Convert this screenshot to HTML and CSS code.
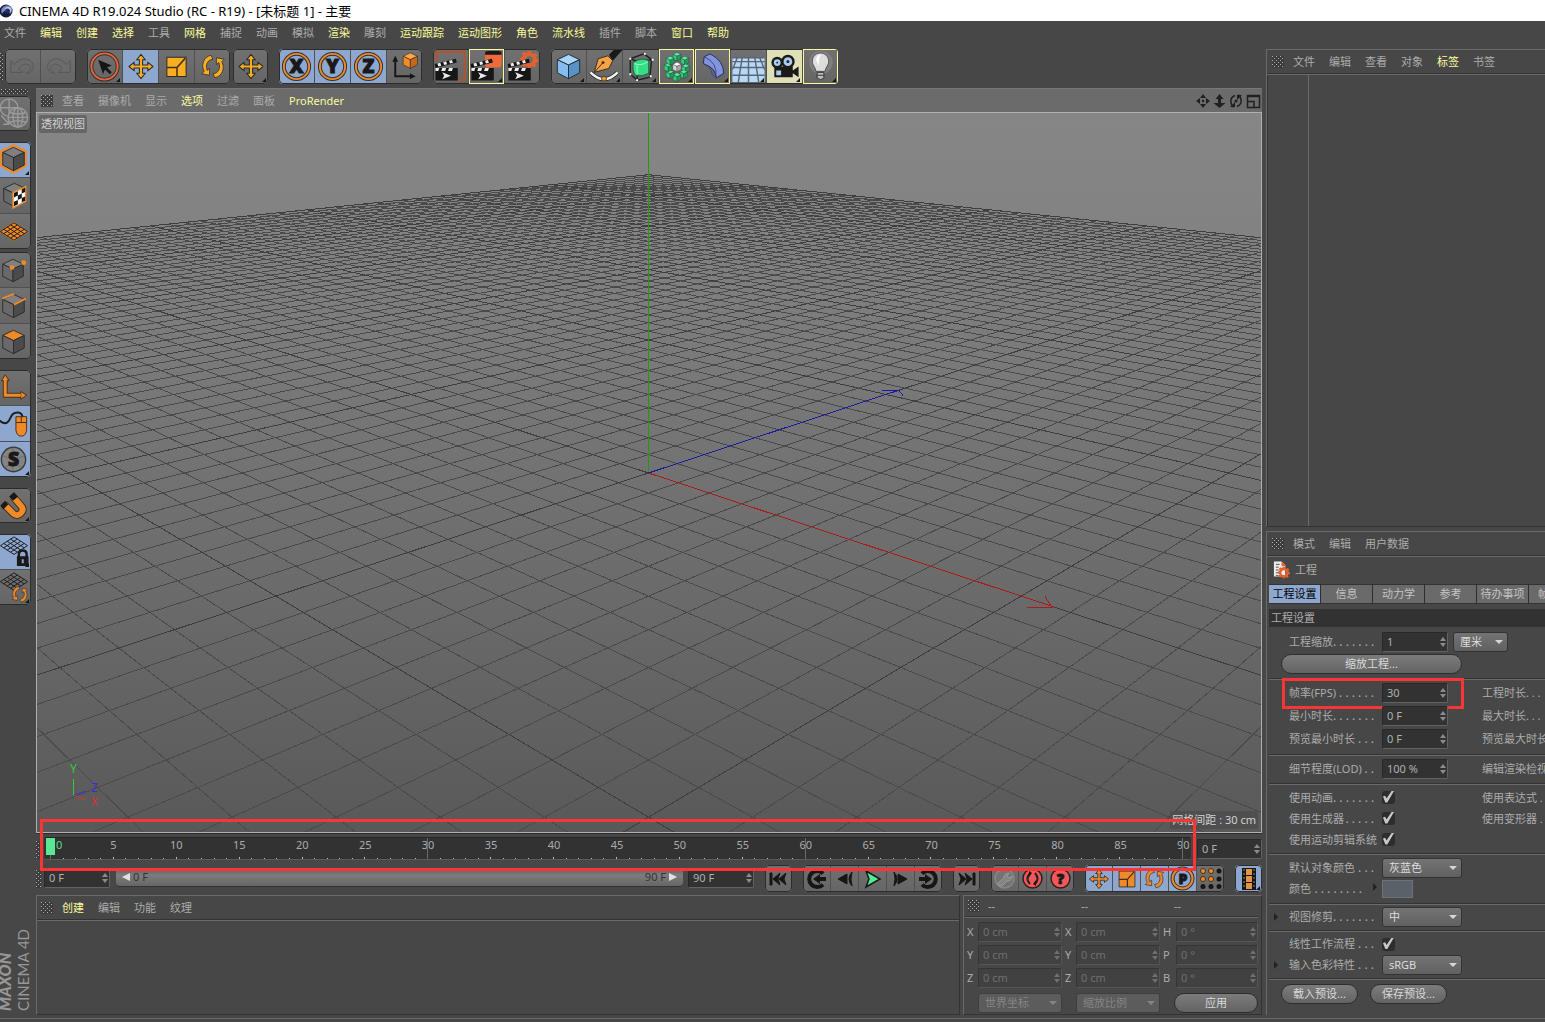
FILE: index.html
```html
<!DOCTYPE html>
<html lang="zh-CN">
<head>
    <meta charset="UTF-8">
    <title>CINEMA 4D</title>
    <link rel="stylesheet" href="styles.css">
</head>
<body>
<svg class="defs" aria-hidden="true">
    <symbol id="cube" viewBox="0 0 26 28">
        <path class="cube-top" d="M13 1.5L24.500 7 13 12.500 1.500 7z"/>
        <path class="cube-left" d="M1.500 7L13 12.500V26.500L1.500 20.500z"/>
        <path class="cube-right" d="M24.500 7L13 12.500V26.500L24.500 20.500z"/>
    </symbol>
    <symbol id="move" viewBox="0 0 24 24">
        <path d="M12 .5l4 5h-2.500v5h5V8l5 4-5 4v-2.500h-5v5H16l-4 5-4-5h2.500v-5h-5V16l-5-4 5-4v2.500h5v-5H8z" stroke="#2b2b2b"/>
    </symbol>
    <symbol id="scale" viewBox="0 0 24 24">
        <path d="M2.500 2.500h19v19h-19z" stroke="#2b2b2b"/>
        <path d="M2.500 12.500h10v9M12.500 12.500l8-9" fill="none" stroke="#3b3020" stroke-width="1.500"/>
    </symbol>
    <symbol id="rotate" viewBox="0 0 26 26">
        <path d="M11 1.500C3 3 .5 12 4 18L1.500 20.500l8 1.500V15l-2.500 2C5 12 7 6 13 5.500z" stroke="#2b2b2b" stroke-width=".8"/>
        <path d="M15 24.500C23 23 25.500 14 22 8l2.500-2.500L16.500 4v7L19 9c2 5 0 11-6 11.500z" stroke="#2b2b2b" stroke-width=".8"/>
    </symbol>
    <symbol id="clapper" viewBox="0 0 26 24">
        <path d="M1 10h23v13H1z" fill="#161616"/>
        <path d="M0 6L22 .5l1 4L1 10z" fill="#161616"/>
        <path d="M3 5.500l3-.8 1 3-3 .8zM9 4l3-.8 1 3-3 .8zM15 2.500l3-.8 1 3-3 .8zM1 10h4l-1 3H1zM8 10h4l-1 3H7zM15 10h4l-1 3h-4z" fill="#eee"/>
        <path d="M8 14.500l9 3.500-9 3.500 2-3.500z" fill="#e8e8e8"/>
    </symbol>
    <symbol id="gear" viewBox="0 0 20 20">
        <path fill-rule="evenodd" d="M8 1h4l.5 2.500 1.800.8L16.500 3 19 5.800l-1.500 2L18 9.500l1.800.5v3l-2.300.6-.8 1.800 1.300 2L15.300 19l-2-1.300-1.300.6L11.500 20h-3l-.7-2-1.600-.6L4 18.500 1.500 16l1.300-2.200L2 12 0 11.500V8.500L2.300 8 3 6.200 1.800 4 4.500 1.600l2 1.400L8 2.500zM10 6.500a4 4 0 1 0 .01 0z"/>
    </symbol>
    <symbol id="spin" viewBox="0 0 6 10">
        <path d="M0 4l3-4 3 4zM0 6l3 4 3-4z"/>
    </symbol>
    <symbol id="mesh" viewBox="0 0 32 20">
        <path d="M16 1L30 10 16 19 2 10zM12.500 3.200l14 9M9 5.500l14 9M5.500 7.700l14 9M19.500 3.200l-14 9M23 5.500l-14 9M26.500 7.700l-14 9"/>
    </symbol>
</svg>

<header class="titlebar">
    <svg class="logo" viewBox="0 0 14 14"><circle cx="6" cy="7" r="6.500" fill="#141a3c"/><path d="M2 10C-1 4 6-1 11 3l2 3-3 4c-2-5-6-4-8 0z" fill="#7a8bc6"/><circle cx="8" cy="6" r="3" fill="#c9d1ee"/><circle cx="7.500" cy="7" r="2.500" fill="#222b5e"/></svg>
    <h1>CINEMA 4D R19.024 Studio (RC - R19) - [未标题 1] - 主要</h1>
</header>

<nav class="menu menubar">
    <a href="#">文件</a>
    <a href="#" class="on">编辑</a>
    <a href="#" class="on">创建</a>
    <a href="#" class="on">选择</a>
    <a href="#">工具</a>
    <a href="#" class="on">网格</a>
    <a href="#">捕捉</a>
    <a href="#">动画</a>
    <a href="#">模拟</a>
    <a href="#" class="on">渲染</a>
    <a href="#">雕刻</a>
    <a href="#" class="on">运动跟踪</a>
    <a href="#" class="on">运动图形</a>
    <a href="#" class="on">角色</a>
    <a href="#" class="on">流水线</a>
    <a href="#">插件</a>
    <a href="#">脚本</a>
    <a href="#" class="on">窗口</a>
    <a href="#" class="on">帮助</a>
</nav>

<div class="app">
    <div class="workspace">
        <div class="toolbar">
            <i class="grip grip-tall"></i>
            <div class="group">
                <button aria-label="撤销"><svg viewBox="0 0 35 36"><path class="ghost" d="M5.500 12v12h12l-4-4c4-5 9-6 12-2 1 3-1 5-4 7 6 0 9-6 6-11-5-6-13-5-18 2z"/></svg></button>
                <button aria-label="重做"><svg viewBox="0 0 35 36"><path class="ghost" d="M29.500 12v12h-12l4-4c-4-5-9-6-12-2-1 3 1 5 4 7-6 0-9-6-6-11 5-6 13-5 18 2z"/></svg></button>
            </div>
            <div class="group">
                <button class="more" aria-label="实时选择"><svg viewBox="0 0 35 36"><circle cx="17.500" cy="18" r="13.500" fill="none" stroke="#33302f" stroke-width="4"/><circle cx="17.500" cy="18" r="13.500" fill="none" stroke="#e5653a" stroke-width="2"/><path d="M11 11l14 6-5 2 5 5-2 2-5-5-2 5z" fill="#161616"/></svg></button>
                <button class="active amber" aria-label="移动"><svg viewBox="0 0 35 36"><use href="#move" x="5" y="5" width="26" height="26"/></svg></button>
                <button class="amber" aria-label="缩放"><svg viewBox="0 0 35 36"><use href="#scale" x="5" y="6" width="25" height="25"/></svg></button>
                <button class="amber" aria-label="旋转"><svg viewBox="0 0 35 36"><use href="#rotate" x="5" y="5" width="26" height="26"/></svg></button>
            </div>
            <div class="group near">
                <button class="amber more" aria-label="最近工具"><svg viewBox="0 0 35 36"><use href="#move" x="5" y="5" width="26" height="26"/></svg></button>
            </div>
            <div class="group">
                <button class="active" aria-label="X 轴"><svg viewBox="0 0 35 36"><circle class="ring-back" cx="17.500" cy="18" r="13"/><circle class="ring" cx="17.500" cy="18" r="13"/><text x="17.500" y="25">X</text></svg></button>
                <button class="active" aria-label="Y 轴"><svg viewBox="0 0 35 36"><circle class="ring-back" cx="17.500" cy="18" r="13"/><circle class="ring" cx="17.500" cy="18" r="13"/><text x="17.500" y="25">Y</text></svg></button>
                <button class="active" aria-label="Z 轴"><svg viewBox="0 0 35 36"><circle class="ring-back" cx="17.500" cy="18" r="13"/><circle class="ring" cx="17.500" cy="18" r="13"/><text x="17.500" y="25">Z</text></svg></button>
                <button class="orange" aria-label="坐标系统"><svg viewBox="0 0 35 36"><path d="M8 12v16h16" fill="none" stroke="#161616" stroke-width="2"/><path d="M8 7l3 6H5zM29 28l-6-3v6z" fill="#161616"/><use href="#cube" x="15" y="3" width="17" height="18"/></svg></button>
            </div>
            <div class="group">
                <button aria-label="渲染活动视图"><svg viewBox="0 0 35 36"><path d="M3 12V3h29v29h-8" fill="none" stroke="#b9502a" stroke-width="2"/><use href="#clapper" x="1" y="9" width="26" height="25"/></svg></button>
                <button class="lit more" aria-label="渲染到图片查看器"><svg viewBox="0 0 35 36"><rect x="16" y="2" width="17" height="17" rx="3" fill="#ee6a38"/><path d="M16 6V4q0-2 3-2h11q3 0 3 2v2z" fill="#191919"/><use href="#clapper" x="1" y="9" width="26" height="25"/></svg></button>
                <button aria-label="编辑渲染设置"><svg viewBox="0 0 35 36"><use href="#gear" x="15" y="1" width="19" height="19" fill="#e5602f"/><use href="#clapper" x="2" y="9" width="26" height="25"/></svg></button>
            </div>
            <div class="group">
                <button class="more sky" aria-label="立方体"><svg viewBox="0 0 35 36"><use href="#cube" x="4" y="4" width="27" height="28"/></svg></button>
                <button class="more" aria-label="画笔"><svg viewBox="0 0 35 36"><path d="M22 6l5-5h9L26 12z" fill="#191919"/><path d="M21 7l5 5-4 8-15 4 4-14z" fill="#f4a244" stroke="#3a2c1c"/><path d="M7 24l9-10" stroke="#3a2c1c"/><circle cx="16" cy="14" r="1.500" fill="#3a2c1c"/><path d="M3 24q14 14 28 0" fill="none" stroke="#222" stroke-width="4"/><path d="M3 24q14 14 28 0" fill="none" stroke="#f2f2f2" stroke-width="2.500"/><circle cx="17" cy="30.500" r="2.500" fill="#f39a35" stroke="#5b3916"/></svg></button>
                <button class="more green" aria-label="细分曲面"><svg viewBox="0 0 35 36"><path d="M7 10l14-5 8 6-2 18-13 3-7-6zM7 10l8 3 14-2M15 13l-1 18" fill="none" stroke="#222" stroke-width="1.500"/><path d="M10 14q8-6 16-2v13q-7 4-14 2-3-4-2-13z" fill="#34df86" stroke="#1b6540"/><path d="M11 15q7 3 14-2M14 17v9" fill="none" stroke="#9bffc8"/><path d="M6 9h2v2H6zM21 4h2v2h-2zM29 10h2v2h-2zM27 27h2v2h-2zM13 31h2v2h-2zM6 25h2v2H6z" fill="#fff"/></svg></button>
                <button class="more lit green" aria-label="克隆"><svg viewBox="0 0 35 36"><use href="#cube" x="13" y="3" width="10" height="10"/><use href="#cube" x="21" y="7" width="10" height="10"/><use href="#cube" x="22" y="15" width="10" height="10"/><use href="#cube" x="20" y="21" width="10" height="10"/><use href="#cube" x="13" y="24" width="10" height="10"/><use href="#cube" x="6" y="21" width="10" height="10"/><use href="#cube" x="4" y="14" width="10" height="10"/><use href="#cube" x="6" y="7" width="10" height="10"/><use class="pale" href="#cube" x="13" y="13" width="10" height="11"/></svg></button>
                <button class="more lit" aria-label="弯曲"><svg viewBox="0 0 35 36"><path d="M9 8l6-3q14 7 14 20l-8 5q1-10-13-15z" fill="#8393dc" stroke="#262b52"/><path d="M9 8q14 6 12 21M21 29l-4-3q0-7-9-11" fill="none" stroke="#3c4788"/></svg></button>
                <button class="more" aria-label="地面"><svg viewBox="0 0 35 36"><path d="M1 9h33v25H1z" fill="#b8d8fa"/><path d="M1 9h33M1 13h33M1 19h33M1 27h33M17.500 9v25M11 9L7 34M24 9l4 25M6 9L1 21M29 9l5 12" fill="none" stroke="#5b6670" stroke-width="1.500"/></svg></button>
                <button class="more cream" aria-label="摄像机"><svg viewBox="0 0 35 36"><path d="M7 18h19v4l6-4v11l-6-4v4H7z" fill="#1a1a1a"/><circle cx="10" cy="14" r="6" fill="#1a1a1a"/><circle cx="21" cy="13" r="7" fill="#1a1a1a"/><circle cx="10" cy="14" r="3.500" fill="#a9cbef"/><circle cx="21" cy="13" r="4.500" fill="#a9cbef"/><circle cx="10" cy="14" r="1" fill="#1a1a1a"/><circle cx="21" cy="13" r="1.500" fill="#1a1a1a"/><path d="M9 22h5v5H9z" fill="#a9cbef"/></svg></button>
                <button class="more lit" aria-label="灯光"><svg viewBox="0 0 35 36"><circle cx="18" cy="14" r="12" fill="#fff" opacity=".13"/><path d="M13 23C12 18 9 17 9 12.500a8.500 8.500 0 0 1 17 0C26 17 23 18 22 23z" fill="#ddd" stroke="#555"/><path d="M13 11q1-5 5-5-3 4-2 12" fill="#fff"/><path d="M14 24h7v6q-3 3-7 0z" fill="#bbb" stroke="#333"/><path d="M14 27h7" stroke="#333"/></svg></button>
            </div>
        </div>

        <div class="stage">
            <aside class="palette">
                <i class="grip grip-wide"></i>
                <div class="group">
                    <button aria-label="转为可编辑对象"><svg viewBox="0 0 35 36"><g fill="none" stroke="#999" stroke-width="1.500"><circle cx="13" cy="12" r="9"/><path d="M13 3v18M4 12h18M5 20l8 9M13 29l-1-6M13 29H7"/><circle cx="22" cy="22" r="10" fill="#6f6f6f"/><ellipse cx="22" cy="22" rx="5" ry="10"/><path d="M22 12v20M12 22h20M14 17q8 3 16 0M14 27q8-3 16 0"/></g></svg></button>
                </div>
                <div class="group">
                    <button class="active more grey" aria-label="模型"><svg viewBox="0 0 35 36"><path d="M17.500 3.500L30 9.500v15l-12.500 7L5 24.500v-15z" fill="none" stroke="#f08a28" stroke-width="2.500"/><use href="#cube" x="5" y="4" width="25" height="27"/></svg></button>
                    <button class="grey" aria-label="纹理"><svg viewBox="0 0 35 36"><use href="#cube" x="6" y="4" width="25" height="27"/><path d="M17 15l13-6v15l-13 7z" fill="#fff" stroke="#f08a28" stroke-width="1.500"/><path d="M18 15.500l4-2V18l-4 2zM22 18l4-2v4.500l-4 2zM26 11.500l3.500-1.500v4.500L26 16zM18 24.500l4-2V27l-4 2zM26 20.500l3.500-1.500v4.500L26 25z" fill="#161616"/></svg></button>
                    <button aria-label="工作平面"><svg viewBox="0 0 35 36"><path d="M18 8l15 10-15 10L3 18z" fill="#ee8727"/><use class="mesh thin" href="#mesh" x="1" y="8" width="34" height="20"/></svg></button>
                </div>
                <div class="group near">
                    <button class="grey" aria-label="点"><svg viewBox="0 0 35 36"><use href="#cube" x="5" y="6" width="24" height="26"/><circle cx="16" cy="16" r="2.500" fill="#f08a28"/><circle cx="28" cy="11" r="2.500" fill="#f08a28"/></svg></button>
                    <button class="grey" aria-label="边"><svg viewBox="0 0 35 36"><use href="#cube" x="5" y="5" width="25" height="27"/><path d="M6 11l12-5M18 17l12-6" stroke="#f08a28" stroke-width="2"/></svg></button>
                    <button class="grey face" aria-label="多边形"><svg viewBox="0 0 35 36"><use href="#cube" x="5" y="5" width="25" height="27"/></svg></button>
                </div>
                <div class="group">
                    <button aria-label="启用轴心"><svg viewBox="0 0 35 36"><path d="M9 10v16h16" fill="none" stroke="#46301c" stroke-width="5"/><path d="M9 5l4 6H5zM31 26l-6-4v8z" fill="#f08a28" stroke="#46301c"/><path d="M9 10v16h16" fill="none" stroke="#f08a28" stroke-width="3"/></svg></button>
                    <button class="active" aria-label="微调"><svg viewBox="0 0 35 36"><path d="M3 15c7 6 10 1 12-4s11-7 12 1" fill="none" stroke="#1d1d1d" stroke-width="2"/><path d="M20 11h11v14q-1 6-5.500 6T20 25z" fill="#f08a28" stroke="#432e18"/><path d="M20 17h11M25.500 11v6" stroke="#432e18"/></svg></button>
                    <button class="active more" aria-label="视窗独显"><svg viewBox="0 0 35 36"><circle cx="17.500" cy="18" r="12.500" fill="#858585" stroke="#3b3b3b" stroke-width="1.500"/><path d="M6 14q12 6 23 0M8 26q9-5 18 0M17 6v24" fill="none" stroke="#6d6d6d"/><text x="17.500" y="25">S</text></svg></button>
                </div>
                <div class="group">
                    <button class="more" aria-label="启用捕捉"><svg viewBox="0 0 35 36"><path d="M8 17l9 9q4 4 8 0t0-8l-8-9" fill="none" stroke="#46301c" stroke-width="8"/><path d="M8 17l9 9q4 4 8 0t0-8l-8-9" fill="none" stroke="#f08a28" stroke-width="6"/><path d="M4 18l5-5 3 4-5 5zM13 9l5-5 4 5-5 4z" fill="#191919"/></svg></button>
                </div>
                <div class="group">
                    <button class="active more" aria-label="锁定工作平面"><svg viewBox="0 0 35 36"><use class="mesh thin" href="#mesh" x="1" y="2" width="34" height="20"/><path d="M23 24v-3q0-4 4-4t4 4v3" fill="none" stroke="#191919" stroke-width="2.500"/><path d="M21 23h12v10H21z" fill="#191919"/><path d="M26 26h2v4h-2z" fill="#8ea7cf"/></svg></button>
                    <button class="more orange-fill" aria-label="平直工作平面"><svg viewBox="0 0 35 36"><use class="mesh thin" href="#mesh" x="1" y="2" width="34" height="20"/><use href="#rotate" x="15" y="16" width="18" height="18"/></svg></button>
                </div>
                <div class="brand"><b>MAXON</b><span>CINEMA 4D</span></div>
            </aside>

            <main class="center">
                <section class="view">
                    <div class="menu view-menu">
                        <i class="grip"></i>
                        <a href="#">查看</a>
                        <a href="#">摄像机</a>
                        <a href="#">显示</a>
                        <a href="#" class="on">选项</a>
                        <a href="#">过滤</a>
                        <a href="#">面板</a>
                        <a href="#" class="on">ProRender</a>
                        <svg class="view-nav" viewBox="0 0 66 16"><g fill="#202020"><path d="M7 1l3 4H4zM7 15l3-4H4zM0 8l4-3v6zM14 8l-4-3v6z"/><circle cx="7" cy="8" r="1.200"/><path d="M23.500 1l4 5H25v4h4.500l-6 5-6-5H22V6h-2.500z"/><circle cx="40" cy="8" r="1.500"/><path d="M34 14h5V9zM46 2h-5v5z"/></g><g fill="none" stroke="#202020" stroke-width="1.500"><path d="M39 2.500q-5 2-4 7t3 4M41 13.500q5-2 4-7t-3-4"/><path d="M51.500 2.500h12v12h-12zM51 3.500h13M52 8.500h6v6"/></g></svg>
                    </div>
                    <div class="viewport">
                        <svg class="scene" viewBox="0 0 1224 719" preserveAspectRatio="xMidYMid slice" shape-rendering="crispEdges" fill="none">
                            <path id="minor" stroke="#4a4a4a"/>
                            <path id="major" stroke="#3e3e3e"/>
                            <path d="M611.500 360V0" stroke="#169f16"/>
                            <path id="axis-z" stroke="#1c1ca0"/>
                            <path id="axis-x" stroke="#a81c1c"/>
                            <path d="M845 277.500h17l4 5" stroke="#1c1ca0"/>
                            <path d="M990 494.500h25l-7-11" stroke="#a81c1c"/>
                        </svg>
                        <span class="hud hud-name">透视视图</span>
                        <span class="hud hud-grid">网格间距 : 30 cm</span>
                        <svg class="gizmo" viewBox="0 0 40 48"><path d="M8.500 17v16" stroke="#3c3"/><path d="M9 33l12-4" stroke="#33d"/><path d="M9 33l12 5" stroke="#d33"/><text x="5" y="11" fill="#3c3">Y</text><text x="26" y="30" fill="#33d">Z</text><text x="26" y="44" fill="#d33">X</text></svg>
                    </div>
                </section>

                <section class="animation">
                    <div class="timeline">
                        <i class="grip grip-side"></i>
                        <div class="ruler">
                            <i class="playhead"></i>
                            <ol id="frames"></ol>
                            <div id="ticks"></div>
                        </div>
                        <span class="field field-end"><input type="text" value="0 F" aria-label="当前帧"><svg><use href="#spin"/></svg></span>
                    </div>
                    <div class="controls">
                        <i class="grip grip-side"></i>
                        <span class="field"><input type="text" value="0 F" aria-label="起始帧"><svg><use href="#spin"/></svg></span>
                        <div class="range">
                            <button aria-label="范围起点"><svg viewBox="0 0 8 8"><path d="M8 0v8L0 4z"/></svg></button>
                            <span>0 F</span><span>90 F</span>
                            <button aria-label="范围终点"><svg viewBox="0 0 8 8"><path d="M0 0v8l8-4z"/></svg></button>
                        </div>
                        <span class="field field-last"><input type="text" value="90 F" aria-label="结束帧"><svg><use href="#spin"/></svg></span>
                        <div class="group small">
                            <button aria-label="转到开始"><svg viewBox="0 0 27 27"><path d="M5 8h2v12H5zM15 8l-7 6 7 6-2-6zM21 8l-7 6 7 6-2-6z" stroke="#161616"/></svg></button>
                        </div>
                        <div class="group small">
                            <button aria-label="上一关键帧"><svg viewBox="0 0 27 27"><path d="M20 8.500A8 8 0 1 0 20 19.500" fill="none" stroke="#161616" stroke-width="4"/><path d="M10 14l7-5v3h6v4h-6v3z"/></svg></button>
                            <button aria-label="上一帧"><svg viewBox="0 0 27 27"><path d="M7 14l9-5v10zM21 7q-6 7 0 14-2-7 0-14z" stroke="#161616"/></svg></button>
                            <button aria-label="播放"><svg viewBox="0 0 27 27"><path d="M7 6l14 8-14 8 3-8z" fill="#4fee93" stroke="#161616" stroke-width="1.500"/></svg></button>
                            <button aria-label="下一帧"><svg viewBox="0 0 27 27"><path d="M20 14l-9-5v10zM7 7q6 7 0 14 2-7 0-14z" stroke="#161616"/></svg></button>
                            <button aria-label="下一关键帧"><svg viewBox="0 0 27 27"><path d="M7 8.500A8 8 0 1 1 7 19.500" fill="none" stroke="#161616" stroke-width="4"/><path d="M17 14l-7-5v3H4v4h6v3z"/></svg></button>
                        </div>
                        <div class="group small">
                            <button aria-label="转到结束"><svg viewBox="0 0 27 27"><path d="M20 8h2v12h-2zM12 8l7 6-7 6 2-6zM6 8l7 6-7 6 2-6z" stroke="#161616"/></svg></button>
                        </div>
                        <div class="group small">
                            <button aria-label="记录活动对象"><svg viewBox="0 0 27 27"><circle cx="13.500" cy="13.500" r="9.500" fill="#747474" stroke="#888" stroke-width="1.500"/><path d="M7 18l6-5q0-5 5-5l-2 3 2 2 3-2q0 5-5 5l-5 5q-3 1-4-3z" fill="#858585" stroke="#999"/></svg></button>
                            <button aria-label="自动关键帧"><svg viewBox="0 0 27 27"><circle cx="13.500" cy="13.500" r="9.500" fill="#f0575b" stroke="#331c1c" stroke-width="1.500"/><path d="M11 8q-5 6 0 11M16 8q5 6 0 11" fill="none" stroke="#222" stroke-width="2"/><path d="M10 6l3 2-3 4zM17 21l-3-2 3-4z"/></svg></button>
                            <button class="letter" aria-label="关键帧选集"><svg viewBox="0 0 27 27"><circle cx="13.500" cy="13.500" r="9.500" fill="#f0575b" stroke="#331c1c" stroke-width="1.500"/><text x="13.500" y="19">?</text></svg></button>
                        </div>
                        <div class="group small">
                            <button class="active orange-fill" aria-label="记录位置"><svg viewBox="0 0 27 27"><use href="#move" x="4" y="4" width="20" height="20"/></svg></button>
                            <button class="active orange-fill" aria-label="记录缩放"><svg viewBox="0 0 27 27"><use href="#scale" x="4" y="4" width="20" height="20"/></svg></button>
                            <button class="active orange-fill" aria-label="记录旋转"><svg viewBox="0 0 27 27"><use href="#rotate" x="3" y="3" width="21" height="21"/></svg></button>
                            <button class="active letter" aria-label="记录参数"><svg viewBox="0 0 27 27"><circle class="ring-back" cx="13.500" cy="13.500" r="10"/><circle class="ring" cx="13.500" cy="13.500" r="10"/><text x="14" y="19">P</text></svg></button>
                            <button aria-label="记录点级别"><svg viewBox="0 0 27 27"><g fill="#f08a28" stroke="#46301c"><circle cx="6" cy="6" r="2.500"/><circle cx="14" cy="6" r="2.500"/><circle cx="6" cy="14" r="2.500"/><circle cx="14" cy="14" r="2.500"/></g><circle cx="22" cy="6" r="2.500"/><circle cx="22" cy="14" r="2.500"/><circle cx="6" cy="21.500" r="2.500"/><circle cx="14" cy="21.500" r="2.500"/><circle cx="22" cy="21.500" r="2.500"/></svg></button>
                        </div>
                        <div class="group small">
                            <button class="active more" aria-label="播放选项"><svg viewBox="0 0 27 27"><path d="M7 3h14v22H7z"/><path d="M11 4h6v6h-6zM11 11h6v6h-6zM11 18h6v6h-6z" fill="#e59546"/><path d="M9 4v20M19 4v20" stroke="#8c8c8c" stroke-dasharray="2 2"/></svg></button>
                        </div>
                    </div>
                    <div class="mark mark-timeline"></div>
                </section>

                <div class="managers">
                    <section class="materials">
                        <div class="menu">
                            <i class="grip"></i>
                            <a href="#" class="on">创建</a>
                            <a href="#">编辑</a>
                            <a href="#">功能</a>
                            <a href="#">纹理</a>
                        </div>
                    </section>
                    <section class="coords">
                        <div class="coords-head"><i class="grip"></i><span>--</span><span>--</span><span>--</span></div>
                        <div class="coords-grid">
                            <label for="px">X</label><span class="field off"><input id="px" type="text" value="0 cm"><svg><use href="#spin"/></svg></span>
                            <label for="sx">X</label><span class="field off"><input id="sx" type="text" value="0 cm"><svg><use href="#spin"/></svg></span>
                            <label for="rh">H</label><span class="field off"><input id="rh" type="text" value="0 °"><svg><use href="#spin"/></svg></span>
                            <label for="py">Y</label><span class="field off"><input id="py" type="text" value="0 cm"><svg><use href="#spin"/></svg></span>
                            <label for="sy">Y</label><span class="field off"><input id="sy" type="text" value="0 cm"><svg><use href="#spin"/></svg></span>
                            <label for="rp">P</label><span class="field off"><input id="rp" type="text" value="0 °"><svg><use href="#spin"/></svg></span>
                            <label for="pz">Z</label><span class="field off"><input id="pz" type="text" value="0 cm"><svg><use href="#spin"/></svg></span>
                            <label for="sz">Z</label><span class="field off"><input id="sz" type="text" value="0 cm"><svg><use href="#spin"/></svg></span>
                            <label for="rb">B</label><span class="field off"><input id="rb" type="text" value="0 °"><svg><use href="#spin"/></svg></span>
                            <span class="drop off"><select aria-label="坐标"><option>世界坐标</option></select></span>
                            <span class="drop off"><select aria-label="尺寸"><option>缩放比例</option></select></span>
                            <button class="pill">应用</button>
                        </div>
                    </section>
                </div>
            </main>
        </div>
    </div>

    <div class="sidebar">
        <section class="objects">
            <div class="menu">
                <i class="grip"></i>
                <a href="#">文件</a>
                <a href="#">编辑</a>
                <a href="#">查看</a>
                <a href="#">对象</a>
                <a href="#" class="on">标签</a>
                <a href="#">书签</a>
            </div>
            <div class="tree"></div>
        </section>

        <section class="attributes">
            <div class="menu">
                <i class="grip"></i>
                <a href="#">模式</a>
                <a href="#">编辑</a>
                <a href="#">用户数据</a>
            </div>
            <div class="attr-title">
                <svg viewBox="0 0 18 18"><path d="M1 0h8l4 4v12H1z" fill="#eee"/><path d="M3 3h4M3 6h3M3 9h3M3 12h3M3 15h3" stroke="#444"/><path d="M9 0l5 5H9z" fill="#e5602f"/><use href="#gear" x="5" y="5" width="13" height="13" fill="#e5602f"/></svg>
                <span>工程</span>
            </div>
            <div class="tabs">
                <button class="selected">工程设置</button>
                <button>信息</button>
                <button>动力学</button>
                <button>参考</button>
                <button>待办事项</button>
                <button>帧插值</button>
            </div>
            <h2>工程设置</h2>

            <div class="block">
                <div class="row">
                    <label for="scale-n">工程缩放<i>. . . . . . .</i></label>
                    <span class="field"><input id="scale-n" type="text" value="1"><svg><use href="#spin"/></svg></span>
                    <span class="drop unit"><select aria-label="单位"><option>厘米</option></select></span>
                </div>
                <button class="pill wide">缩放工程...</button>
            </div>
            <div class="block spaced">
                <div class="row">
                    <label for="fps">帧率(FPS)<i>. . . . . .</i></label>
                    <span class="field"><input id="fps" type="text" value="30"><svg><use href="#spin"/></svg></span>
                    <span class="second">工程时长. . .</span>
                    <div class="mark mark-fps"></div>
                </div>
                <div class="row">
                    <label for="tmin">最小时长<i>. . . . . . .</i></label>
                    <span class="field"><input id="tmin" type="text" value="0 F"><svg><use href="#spin"/></svg></span>
                    <span class="second">最大时长. . .</span>
                </div>
                <div class="row">
                    <label for="pmin">预览最小时长<i>. . .</i></label>
                    <span class="field"><input id="pmin" type="text" value="0 F"><svg><use href="#spin"/></svg></span>
                    <span class="second">预览最大时长</span>
                </div>
            </div>
            <div class="block">
                <div class="row">
                    <label for="lod">细节程度(LOD)<i>. .</i></label>
                    <span class="field"><input id="lod" type="text" value="100 %"><svg><use href="#spin"/></svg></span>
                    <span class="second">编辑渲染检视</span>
                </div>
            </div>
            <div class="block tight checks">
                <div class="row">
                    <label for="uanim">使用动画<i>. . . . . . .</i></label>
                    <input id="uanim" type="checkbox" checked>
                    <span class="second">使用表达式 .</span>
                </div>
                <div class="row">
                    <label for="ugen">使用生成器<i>. . . . .</i></label>
                    <input id="ugen" type="checkbox" checked>
                    <span class="second">使用变形器 .</span>
                </div>
                <div class="row">
                    <label for="umotion">使用运动剪辑系统</label>
                    <input id="umotion" type="checkbox" checked>
                </div>
            </div>
            <div class="block">
                <div class="row">
                    <label for="defcol">默认对象颜色<i>. . .</i></label>
                    <span class="drop"><select id="defcol"><option>灰蓝色</option></select></span>
                </div>
                <div class="row">
                    <label for="col">颜色<i class="short">. . . . . . . .</i></label>
                    <button id="col" class="swatch" aria-label="颜色"></button>
                </div>
            </div>
            <div class="block tight">
                <div class="row fold">
                    <label for="clip">视图修剪<i>. . . . . . .</i></label>
                    <span class="drop"><select id="clip"><option>中</option></select></span>
                </div>
            </div>
            <div class="block tight">
                <div class="row">
                    <label for="linear">线性工作流程<i>. . .</i></label>
                    <input id="linear" type="checkbox" checked>
                </div>
                <div class="row fold">
                    <label for="profile">输入色彩特性<i>. . .</i></label>
                    <span class="drop"><select id="profile"><option>sRGB</option></select></span>
                </div>
            </div>
            <div class="block presets">
                <button class="pill">载入预设...</button>
                <button class="pill">保存预设...</button>
            </div>
        </section>
    </div>
</div>
<footer class="statusbar"></footer>

<script src="main.js"></script>
</body>
</html>
```
FILE: styles.css
```css
*{
    box-sizing: border-box;
    margin: 0;
    padding: 0;
}
body{
    display: flex;
    flex-direction: column;
    height: 100vh;
    overflow: hidden;
    background: #474747;
    color: #acacac;
    font: 11px/16px "Noto Sans", "Noto Sans CJK SC", sans-serif;
}
button, input, select{
    font: inherit;
    color: inherit;
    border: 0;
    background: none;
}
a{
    color: inherit;
    text-decoration: none;
}
i{
    font-style: normal;
}
svg{
    display: block;
}
.defs{
    position: absolute;
    width: 0;
    height: 0;
}

/* title and menus */
.titlebar{
    display: flex;
    align-items: center;
    height: 21px;
    background: #fff;
    color: #000;
    gap: 5px;
}
.titlebar h1{
    font-size: 13px;
    line-height: 18px;
    font-weight: normal;
}
.logo{
    width: 14px;
    height: 14px;
}
.menu{
    display: flex;
    align-items: center;
    gap: 14px;
    height: 24px;
    padding-left: 5px;
    white-space: nowrap;
}
.menubar{
    padding-left: 4px;
}
.menu .on{
    color: #fafa9c;
}
.grip{
    flex: none;
    width: 12px;
    height: 12px;
    background:
        conic-gradient(from 270deg at 1px 1px, #b0b0b0 90deg, transparent 0) 0 0 / 4px 4px,
        conic-gradient(from 270deg at 1px 1px, #b0b0b0 90deg, transparent 0) 2px 2px / 4px 4px,
        #3c3c3c;
}
.menu .grip{
    margin-right: -5px;
}

/* frame */
.app{
    display: flex;
    flex: 1;
    min-height: 0;
}
.workspace{
    display: flex;
    flex-direction: column;
    flex: 1;
    min-width: 0;
    margin-right: 4px;
}
.stage{
    display: flex;
    flex: 1;
    min-height: 0;
}
.center{
    display: flex;
    flex-direction: column;
    flex: 1;
    min-width: 0;
}
.statusbar{
    height: 7px;
    border-top: 3px solid #474747;
    box-shadow: inset 0 1px #6a6a6a;
}

/* tool buttons */
.toolbar{
    display: flex;
    align-items: center;
    height: 43px;
}
.group{
    position: relative;
    display: flex;
    flex: none;
    gap: 1px;
    margin-left: 11px;
    background: #505050;
    border-radius: 4px;
    overflow: hidden;
}
.group::after{
    content: "";
    position: absolute;
    inset: 0;
    border: 1px solid #2c2c2c;
    border-radius: 4px;
    pointer-events: none;
}
.group.near{
    margin-left: 3px;
}
.grip-tall{
    width: 3px;
    height: 27px;
}
.grip-tall + .group{
    margin-left: 2px;
}
.group button{
    position: relative;
    width: 35px;
    height: 35px;
    background: linear-gradient(#717171, #656565);
    overflow: hidden;
}
.group button svg{
    width: 100%;
    height: 100%;
}
.group .active{
    background: #8ea7cf;
}
.group .cream{
    background: #e0e0b8;
}
.group .lit{
    box-shadow: inset 0 0 0 1px #fafa9c;
    z-index: 1;
}
.more::after{
    content: "";
    position: absolute;
    right: 2px;
    bottom: 2px;
    border: 2px solid #161616;
    border-top-color: transparent;
    border-left-color: transparent;
}
.group text{
    fill: #191919;
    stroke: #191919;
    font: 800 20px "Open Sans", sans-serif;
    text-anchor: middle;
}
.ring-back{
    fill: none;
    stroke: #33302f;
    stroke-width: 4px;
}
.ring{
    fill: none;
    stroke: #e88a2d;
    stroke-width: 2px;
}
.ghost{
    fill: #6c6c6c;
    stroke: #575757;
}
.amber{
    fill: #f9ad20;
}
.orange-fill{
    fill: #f08a28;
}
.cube-top, .cube-left, .cube-right{
    stroke: #2b2b2b;
}
.cube-top{
    fill: var(--top);
}
.cube-left{
    fill: var(--left);
}
.cube-right{
    fill: var(--right);
}
.sky{
    --top: #a5d6ff;
    --left: #83bdf2;
    --right: #5792c8;
}
.orange{
    --top: #ffa64e;
    --left: #f58a26;
    --right: #c4691b;
}
.green{
    --top: #57efa0;
    --left: #33cf7e;
    --right: #229c5b;
}
.pale{
    --top: #fff;
    --left: #d8d8d8;
    --right: #aaa;
}
.grey{
    --top: #808080;
    --left: #696969;
    --right: #4b4b4b;
}
.face{
    --top: #f08a28;
}
.mesh{
    fill: none;
    stroke: #1d1d1d;
}

/* left palette */
.palette{
    display: flex;
    flex-direction: column;
    width: 36px;
    overflow: hidden;
}
.palette .group{
    flex-direction: column;
    width: 35px;
    margin: 11px 0 0 -4px;
}
.palette .group.near{
    margin-top: 3px;
}
.grip-wide{
    width: 27px;
    height: 5px;
    margin: 1px 0 0 1px;
}
.palette .grip-wide + .group{
    margin-top: 2px;
}
.brand{
    display: flex;
    flex-direction: column;
    margin: auto 0 4px -5px;
    color: #979797;
    writing-mode: vertical-rl;
    transform: rotate(180deg);
    font: 15px/19px Lato, sans-serif;
    white-space: nowrap;
}
.brand b{
    font-size: 16px;
    font-weight: 900;
    font-style: italic;
}

/* perspective view */
.view{
    display: flex;
    flex-direction: column;
    flex: 1;
    min-height: 0;
}
.view-menu{
    background: #6b6b6b;
    border-top: 1px solid #777;
}
.view-nav{
    width: 66px;
    height: 16px;
    margin-left: auto;
}
.viewport{
    position: relative;
    flex: 1;
    min-height: 0;
    border: 1px solid #b0b0b0;
    background: linear-gradient(#868686, #828282 17%, #787878 38%, #696969 70%, #595959);
    box-shadow: 0 1px #2c2c2c;
}
.scene{
    position: absolute;
    width: 100%;
    height: 100%;
}
.hud{
    position: absolute;
    padding: 1px 2px;
    border-radius: 2px;
    background: #666;
    color: #d2d2d2;
}
.hud-name{
    left: 2px;
    top: 2px;
}
.hud-grid{
    right: 3px;
    bottom: 3px;
    background: #4f4f4f;
}
.gizmo{
    position: absolute;
    left: 28px;
    bottom: 22px;
    width: 40px;
    height: 48px;
    font-size: 12px;
}

/* timeline */
.animation{
    position: relative;
    padding-top: 4px;
}
.timeline, .controls{
    display: flex;
}
.timeline{
    height: 26px;
}
.grip-side{
    width: 5px;
    height: 18px;
    margin: 4px 3px 0 0;
}
.ruler{
    position: relative;
    flex: 1;
    height: 23px;
    border-radius: 3px;
    background: #323232;
    border-top: 1px solid #252525;
    border-bottom: 1px solid #5a5a5a;
    padding: 0 7px 0 6px;
}
.ruler ol, #ticks{
    display: flex;
    justify-content: space-between;
    list-style: none;
}
.ruler li{
    display: flex;
    justify-content: center;
    width: 1px;
    height: 16px;
    line-height: 14px;
}
.ruler li:first-child{
    color: #58dd91;
    justify-content: flex-start;
    text-indent: 6px;
}
#ticks{
    align-items: flex-end;
    height: 5px;
}
#ticks i{
    width: 1px;
    height: 1px;
    background: #bbb;
}
#ticks .five{
    height: 2px;
}
#ticks .long{
    height: 21px;
    background: #6b6b6b;
}
.playhead{
    position: absolute;
    left: 2px;
    top: 0;
    width: 9px;
    height: 17px;
    background: #5ae695;
}
.controls{
    height: 32px;
    padding-top: 2px;
}
.controls .grip-side{
    margin-top: 5px;
}
.controls .field{
    margin-top: 3px;
}
.controls .field-last{
    margin-left: 5px;
}
.range{
    display: flex;
    align-items: center;
    flex: 1;
    height: 19px;
    margin: 3px 0 0 6px;
    padding: 0 6px;
    gap: 3px;
    border-radius: 4px;
    background: linear-gradient(#5e5e5e, #7c7c7c 40%, #666);
    border-bottom: 1px solid #333;
    color: #333;
}
.range span:last-of-type{
    margin-left: auto;
}
.range svg{
    width: 8px;
    height: 8px;
    fill: #e2e2e2;
}
.group.small{
    height: 27px;
}
.small button{
    width: 27px;
    height: 27px;
    fill: #161616;
}
.small .orange-fill{
    fill: #f08a28;
}
.small .letter text{
    font-size: 14px;
}
.mark{
    position: absolute;
    border: 3px solid #fa3535;
    pointer-events: none;
}
.mark-timeline{
    left: 4px;
    right: 66px;
    top: -14px;
    height: 52px;
}

/* fields */
.field{
    display: flex;
    align-items: center;
    flex: none;
    width: 66px;
    height: 20px;
    padding: 0 1px 0 4px;
    background: #323232;
    border: 1px solid;
    border-color: #282828 #626262 #626262 #282828;
    border-radius: 2px;
    color: #b0b0b0;
}
.field input{
    flex: 1;
    min-width: 0;
    width: 0;
    height: 16px;
}
.field svg{
    width: 6px;
    height: 10px;
    fill: #8c8c8c;
}
.field-end{
    width: 65px;
    margin: 2px 0 0 6px;
}
.drop{
    position: relative;
    display: block;
    width: 80px;
    height: 20px;
}
.drop select{
    display: block;
    appearance: none;
    width: 100%;
    height: 20px;
    padding: 0 6px 1px;
    border: 1px solid #333;
    border-radius: 3px;
    background: linear-gradient(#747474, #606060);
    color: #dcdcdc;
}
.drop::after{
    content: "";
    position: absolute;
    right: 5px;
    top: 8px;
    border: 4px solid transparent;
    border-top-color: #d6d6d6;
    border-bottom: 0;
    pointer-events: none;
}
.pill{
    height: 20px;
    border: 1px solid #2e2e2e;
    border-radius: 10px;
    background: linear-gradient(#7c7c7c, #636363);
    color: #dadada;
    line-height: 16px;
}
.off.field{
    background: #414141;
    border-color: #353535 #555 #555 #353535;
    color: #6f6f6f;
}
.off.field svg{
    fill: #6f6f6f;
}
.off select{
    background: #5c5c5c;
    border-color: #3e3e3e;
    color: #858585;
}
.off.drop::after{
    border-top-color: #858585;
}

/* materials and coordinates */
.managers{
    display: flex;
    gap: 3px;
    height: 120px;
}
.materials, .coords{
    border: 1px solid;
    border-color: #6a6a6a #333 #333 #6a6a6a;
}
.materials{
    flex: 1;
}
.materials .menu, .objects .menu, .attributes .menu{
    border-bottom: 1px solid #333;
    box-shadow: 0 1px #6a6a6a;
}
.materials .menu{
    padding-left: 4px;
}
.coords{
    width: 299px;
    padding: 0 3px 0 1px;
}
.coords-head{
    display: grid;
    grid-template-columns: 20px 93px 93px 1fr;
    align-items: center;
    height: 21px;
    padding-left: 3px;
    border-bottom: 1px solid #333;
    box-shadow: 0 1px #6a6a6a;
}
.coords-grid{
    display: grid;
    grid-template-columns: 8px 84px 8px 84px 10px 82px;
    align-items: center;
    gap: 3px;
    padding: 5px 0 0 2px;
}
.coords-grid .field{
    width: 100%;
}
.coords-grid .drop, .coords-grid .pill{
    grid-column: span 2;
    justify-self: end;
    width: 84px;
    margin-top: 2px;
}

/* sidebar */
.sidebar{
    display: flex;
    flex-direction: column;
    gap: 4px;
    width: 279px;
    padding-top: 4px;
    overflow: hidden;
}
.objects, .attributes{
    display: flex;
    flex-direction: column;
    border: solid #6a6a6a;
    border-width: 1px 0 0 1px;
}
.objects{
    flex: 1;
    border-bottom: 1px solid #333;
}
.tree{
    flex: 1;
    width: 42px;
    margin-top: 1px;
    border-left: 1px solid #333;
    border-right: 1px solid #6a6a6a;
}
.attributes{
    height: 491px;
    margin-bottom: -7px;
    padding-left: 2px;
}
.attributes .menu{
    flex: none;
    margin-left: -2px;
}
.attr-title{
    display: flex;
    align-items: center;
    gap: 5px;
    height: 28px;
    padding-left: 4px;
}
.attr-title svg{
    width: 17px;
    height: 18px;
}
.tabs{
    display: flex;
    gap: 1px;
    height: 20px;
    background: #2e2e2e;
    overflow: hidden;
}
.tabs button{
    flex: none;
    width: 51px;
    padding-bottom: 1px;
    background: #6a6a6a;
    color: #c4c4c4;
    border-top: 1px solid #333;
    border-bottom: 1px solid #333;
}
.tabs .selected{
    background: #8ea7cf;
    color: #000;
}
.attributes h2{
    margin: 5px 0 2px;
    padding: 1px 2px;
    background: #323232;
    font-size: 11px;
    font-weight: normal;
    line-height: 16px;
}
.block{
    display: flex;
    flex-direction: column;
    gap: 1px;
    padding: 3px 0 4px;
}
.block + .block{
    border-top: 1px solid #333;
    box-shadow: inset 0 1px #6a6a6a;
    padding-top: 4px;
}
.block + .tight{
    padding: 3px 0;
}
.block.spaced{
    gap: 3px;
    padding-bottom: 5px;
}
.row{
    position: relative;
    display: grid;
    grid-template-columns: 93px 100px 1fr;
    align-items: center;
    height: 20px;
    padding-left: 20px;
    white-space: nowrap;
}
.row label{
    display: flex;
    justify-content: space-between;
    width: 85px;
}
.row i{
    font-size: 12px;
}
.row .short{
    margin-right: 12px;
}
.block.checks{
    gap: 0;
}
.checks .row{
    height: 21px;
}
.row:has(.unit){
    grid-template-columns: 93px 71px 1fr;
}
.drop.unit{
    width: 55px;
}
.row.fold::before, .row:has(.swatch)::before{
    content: "";
    position: absolute;
    left: 5px;
    top: 6px;
    border: 4px solid transparent;
    border-left-color: #222;
    border-right: 0;
}
.row:has(.swatch)::before{
    left: 104px;
    top: 4px;
}
.mark-fps{
    left: 13px;
    top: -5px;
    width: 182px;
    height: 31px;
}
.swatch{
    width: 31px;
    height: 18px;
    background: #5a6169;
    border: 1px solid #6c7177;
}
.pill.wide{
    width: 181px;
    margin: 1px 0 0 12px;
}
.block.presets{
    flex-direction: row;
    gap: 12px;
    padding: 5px 0 0 12px;
}
.presets .pill{
    width: 77px;
}
input[type=checkbox]{
    appearance: none;
    width: 13px;
    height: 13px;
    border-radius: 3px;
    background: #2d2d2d;
}
input[type=checkbox]:checked::before{
    content: "";
    display: block;
    width: 12px;
    height: 12px;
    background: #c8c8c8;
    clip-path: polygon(8% 45%, 26% 40%, 38% 62%, 80% 0, 100% 0, 44% 96%, 28% 96%);
}
```
FILE: main.js
```js
// ground plane: 50 cells each way from the origin, seen along its diagonal
var CX = 611.5, HORIZON = -73, DEPTH = 22.58, KX = 1310, KY = 9777, SIZE = 50, NEAR = 8, AXIS = 10.67;

function project(i, j) {
    var d = DEPTH - (i + j) / 2;
    return (CX + KX * (i - j) / 2 / d).toFixed(1) + ' ' + (HORIZON + KY / d).toFixed(1);
}

function line(i1, j1, i2, j2) {
    return 'M' + project(i1, j1) + 'L' + project(i2, j2);
}

var minor = '', major = '';
for (var n = -SIZE; n <= SIZE; n++) {
    var end = Math.min(SIZE, 2 * (DEPTH - NEAR) - n);
    if (end <= -SIZE) continue;
    if (n === 0) {
        // leave room for the coloured axes
        major += line(0, -SIZE, 0, -AXIS) + line(0, 0, 0, end);
        major += line(-SIZE, 0, 0, 0) + line(AXIS, 0, end, 0);
    } else {
        var d = line(n, -SIZE, n, end) + line(-SIZE, n, end, n);
        if (n % 10 === 0) {
            major += d;
        } else {
            minor += d;
        }
    }
}
document.getElementById('minor').setAttribute('d', minor);
document.getElementById('major').setAttribute('d', major);
document.getElementById('axis-z').setAttribute('d', line(0, 0, 0, -AXIS));
document.getElementById('axis-x').setAttribute('d', line(0, 0, AXIS, 0));

// frame ruler
var oFrames = document.getElementById('frames');
var oTicks = document.getElementById('ticks');
for (var f = 0; f <= 90; f++) {
    var tick = document.createElement('i');
    if (f % 30 === 0) {
        tick.className = 'long';
    } else if (f % 5 === 0) {
        tick.className = 'five';
    }
    oTicks.appendChild(tick);
    if (f % 5 === 0) {
        var li = document.createElement('li');
        li.textContent = f;
        oFrames.appendChild(li);
    }
}
```
